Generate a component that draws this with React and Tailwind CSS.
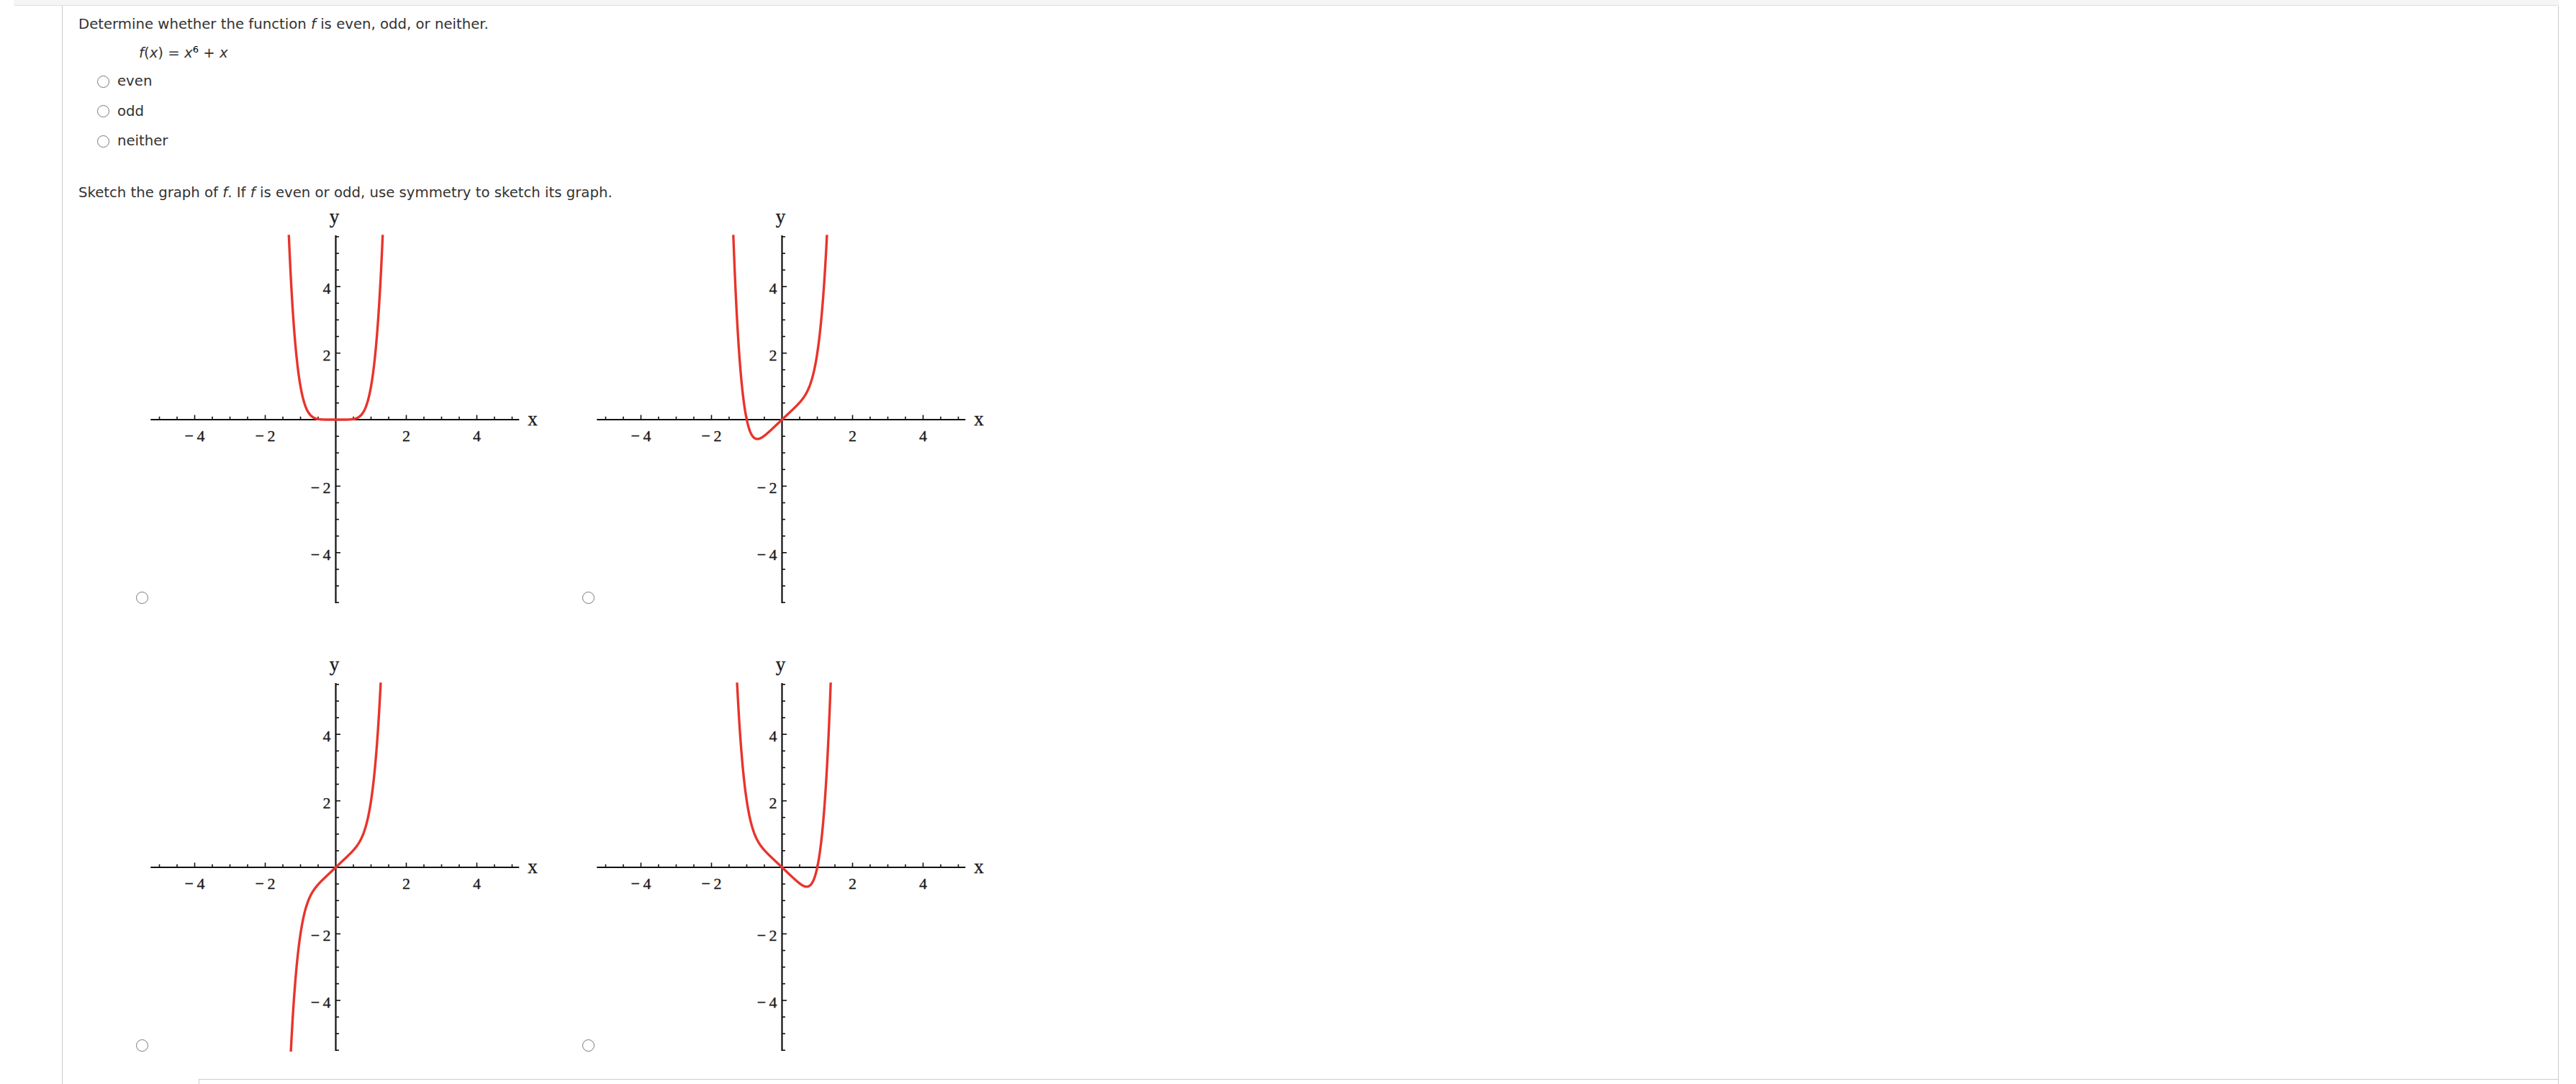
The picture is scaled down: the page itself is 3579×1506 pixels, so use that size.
import React from 'react';

const SX = 49;
const SY = 46.2;
const OX = 260.5;
const OY = 303;
const W = 550;
const H = 560;

const fns = [
  (x) => Math.pow(x, 6),
  (x) => Math.pow(x, 6) + x,
  (x) => Math.sign(x) * Math.pow(Math.abs(x), 6) + x,
  (x) => Math.pow(x, 6) - x,
];

function curvePath(f) {
  let d = '';
  for (let i = 0; i <= 1000; i++) {
    const x = -2 + i * 0.004;
    let y = f(x);
    if (y > 8) y = 8;
    if (y < -8) y = -8;
    const px = OX + x * SX;
    const py = OY - y * SY;
    d += (i ? 'L' : 'M') + px.toFixed(2) + ' ' + py.toFixed(2);
  }
  return d;
}

function Graph({ f, id }) {
  const xt = [];
  for (let i = -10; i <= 10; i++) {
    if (i === 0) continue;
    const k = i / 2;
    const major = i % 4 === 0;
    const x = OX + k * SX;
    xt.push(<line key={'x' + i} x1={x} x2={x} y1={OY} y2={OY - (major ? 6.5 : 4.3)} stroke="#111" strokeWidth="1.6" />);
  }
  const yt = [];
  for (let i = -11; i <= 11; i++) {
    if (i === 0) continue;
    const k = i / 2;
    const major = i % 4 === 0;
    const y = OY - k * SY;
    yt.push(<line key={'y' + i} x1={OX} x2={OX + (major ? 6.5 : 4.5)} y1={y} y2={y} stroke="#111" strokeWidth="1.6" />);
  }
  const labels = [-4, -2, 2, 4];
  const lab = (v) => (v < 0 ? '\u2212\u2009' + Math.abs(v) : String(v));
  return (
    <svg width={W} height={H} viewBox={`0 0 ${W} ${H}`} className="block shrink-0">
      <defs>
        <clipPath id={id}>
          <rect x="0" y={OY - 5.56 * SY} width={W} height={11.1 * SY} />
        </clipPath>
      </defs>
      <line x1={OX - 5.25 * SX} x2={OX + 5.2 * SX} y1={OY} y2={OY} stroke="#111" strokeWidth="2.2" />
      <line x1={OX} x2={OX} y1={OY - 5.54 * SY} y2={OY + 5.52 * SY} stroke="#111" strokeWidth="2.2" />
      {xt}
      {yt}
      <g fontFamily="'Liberation Serif', serif" fill="#1a1a1a" stroke="#1a1a1a" strokeWidth="0.35">
        {labels.map((v) => (
          <text key={'lx' + v} x={OX + v * SX} y={OY + 30} fontSize="22" textAnchor="middle">
            {lab(v)}
          </text>
        ))}
        {labels.map((v) => (
          <text key={'ly' + v} x={OX - 7} y={OY - v * SY + 10} fontSize="22" textAnchor="end">
            {lab(v)}
          </text>
        ))}
        <text x={OX - 2} y={29.5} fontSize="27" textAnchor="middle">y</text>
        <text x={534} y={OY + 8} fontSize="27" textAnchor="middle">x</text>
      </g>
      <path d={curvePath(f)} fill="none" stroke="#e8342b" strokeWidth="3.4" strokeLinejoin="round" clipPath={`url(#${id})`} />
    </svg>
  );
}

function Radio({ className = '' }) {
  return <span className={`block w-[17px] h-[17px] rounded-full border-[1.5px] border-[#777] bg-white shrink-0 ${className}`} />;
}

function Option({ label, first }) {
  return (
    <div className={`flex items-center h-[24px] pl-[26px] ${first ? 'mt-[15px]' : 'mt-[17.5px]'}`}>
      <Radio />
      <span className="ml-[11px]">{label}</span>
    </div>
  );
}

export default function App() {
  return (
    <div className="bg-white min-h-screen w-[3579px] overflow-hidden font-['DejaVu_Sans',Verdana,sans-serif] text-[19.7px] leading-[24px] text-[#333]">
      <div className="ml-[19px] w-[3536px] h-[8px] bg-[#f5f5f5] border-b border-[#dedede] rounded-b-[3px]" />
      <div className="ml-[86px] w-[3469px] border-l border-r border-[#cccccc] pt-[14px] pl-[22px] h-[1520px]">
        <div className="h-[24px] whitespace-nowrap">
          Determine whether the function <i>f</i> is even, odd, or neither.
        </div>
        <div className="h-[24px] mt-[16px] pl-[84px] whitespace-nowrap">
          <i>f</i>(<i>x</i>) = <i>x</i>
          <span className="relative top-[-7px] text-[13px] text-black">6</span> + <i>x</i>
        </div>
        <Option label="even" first />
        <Option label="odd" />
        <Option label="neither" />
        <div className="h-[24px] mt-[48px] whitespace-nowrap">
          Sketch the graph of <i>f</i>. If <i>f</i> is even or odd, use symmetry to sketch its graph.
        </div>
        <div className="mt-0 ml-[79.5px] grid grid-cols-[620px_620px] gap-y-[62px]">
          {fns.map((f, i) => (
            <div key={i} className="flex items-end w-[620px]">
              <Radio className="mb-[1.5px]" />
              <Graph f={f} id={'clip' + i} />
            </div>
          ))}
        </div>
        <div className="mt-[37px] ml-[167px] h-[60px] border-t border-l border-[#cccccc]" />
      </div>
    </div>
  );
}
